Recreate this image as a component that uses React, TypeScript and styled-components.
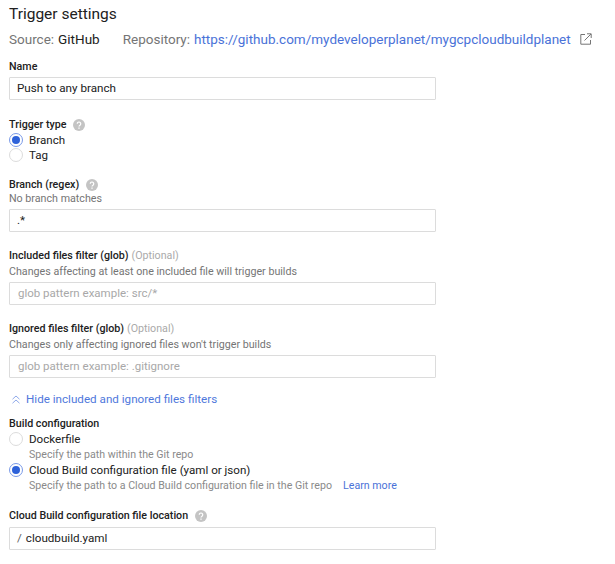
import styled, { createGlobalStyle } from "styled-components";

const GlobalStyle = createGlobalStyle`
  html, body {
    margin: 0;
    background: #fff;
    font-family: Roboto, "Liberation Sans", sans-serif;
  }
`;

const Page = styled.div`
  width: 615px;
  height: 564px;
  padding: 4px 0 0 9px;
  box-sizing: border-box;
  overflow: hidden;
`;

const Title = styled.h2`
  margin: 0;
  height: 20px;
  font-size: 15.5px;
  line-height: 20px;
  font-weight: 400;
  color: #212121;
`;

const SourceRow = styled.div`
  display: flex;
  align-items: center;
  height: 20px;
  margin-top: 5px;
  font-size: 13.5px;
  color: #757575;
  white-space: nowrap;
`;

const SourceValue = styled.span`
  color: #212121;
  margin-left: 4px;
  margin-right: 23px;
`;

const RepoLink = styled.a`
  color: #4a72d8;
  margin-left: 4px;
  margin-right: 9px;
`;

const Label = styled.div<{ $top: number }>`
  display: flex;
  align-items: center;
  gap: 7px;
  height: 14px;
  margin-top: ${(p) => p.$top}px;
  font-size: 10.7px;
  line-height: 14px;
  font-weight: 500;
  color: #212121;
`;

const Optional = styled.span`
  font-weight: 400;
  color: #aaa;
  margin-left: -4px;
`;

const Hint = styled.div<{ $top: number }>`
  height: 15px;
  margin-top: ${(p) => p.$top}px;
  font-size: 10.7px;
  line-height: 15px;
  color: #757575;
`;

const Field = styled.div<{ $top: number }>`
  display: flex;
  align-items: center;
  box-sizing: border-box;
  width: 427px;
  height: 23px;
  margin-top: ${(p) => p.$top}px;
  padding: 0 7px 2px;
  border: 1px solid #dcdcdc;
  border-radius: 1px;
  font-size: 11.65px;
  color: #212121;
`;

const Placeholder = styled.span`
  color: #a8a8a8;
  font-size: 11.5px;
  padding-left: 1px;
`;

const RadioRow = styled.div`
  display: flex;
  align-items: center;
  gap: 6px;
  height: 15.5px;
  font-size: 11.6px;
  color: #212121;
`;

const RadioCircle = styled.span<{ $on?: boolean }>`
  display: flex;
  align-items: center;
  justify-content: center;
  box-sizing: border-box;
  width: 14px;
  height: 14px;
  border-radius: 50%;
  border: 1px solid ${(p) => (p.$on ? "#7a9ae8" : "#dcdcdc")};
  &::after {
    content: "";
    display: ${(p) => (p.$on ? "block" : "none")};
    width: 8px;
    height: 8px;
    border-radius: 50%;
    background: #2e62d9;
  }
`;

const RadioHint = styled.div`
  display: flex;
  height: 15.5px;
  padding-left: 20px;
  font-size: 10.63px;
  line-height: 15.5px;
  color: #8a8a8a;
`;

const LearnMore = styled.a`
  color: #4a72d8;
  margin-left: 11px;
`;

const ToggleLink = styled.div`
  display: flex;
  align-items: center;
  gap: 6px;
  height: 16px;
  margin-top: 13px;
  margin-left: 3px;
  font-size: 11.65px;
  color: #4f78dc;
`;

const PathSlash = styled.span`
  color: #616161;
  margin-right: 4px;
`;

function HelpIcon() {
  return (
    <svg width="12" height="12" viewBox="0 0 24 24">
      <circle cx="12" cy="12" r="12" fill="#c4c4c4" />
      <path
        d="M8.5 9.5a3.5 3.5 0 1 1 5.5 2.9c-1.2.8-2 1.4-2 2.8"
        fill="none"
        stroke="#fff"
        strokeWidth="2.4"
      />
      <rect x="10.7" y="17" width="2.6" height="2.6" fill="#fff" />
    </svg>
  );
}

function ExternalIcon() {
  return (
    <svg width="12" height="12" viewBox="0 0 12 12" fill="none" stroke="#757575" strokeWidth="1">
      <path d="M5 1.5H.8v9.7h9.7V7" />
      <path d="M4.5 7.5 11 1M7 .8h4.2V5" />
    </svg>
  );
}

function ChevronsUpIcon() {
  return (
    <svg width="8" height="9" viewBox="0 0 8 9" fill="none" stroke="#8fa9ea" strokeWidth="1">
      <path d="M.5 4.2 4 1l3.5 3.2M.5 8.2 4 5l3.5 3.2" />
    </svg>
  );
}

export default function App() {
  return (
    <Page>
      <GlobalStyle />
      <Title>Trigger settings</Title>
      <SourceRow>
        Source:<SourceValue>GitHub</SourceValue>
        Repository:
        <RepoLink>https://github.com/mydeveloperplanet/mygcpcloudbuildplanet</RepoLink>
        <ExternalIcon />
      </SourceRow>

      <Label $top={11}>Name</Label>
      <Field $top={3}>Push to any branch</Field>

      <Label $top={18}>
        Trigger type <HelpIcon />
      </Label>
      <RadioRow>
        <RadioCircle $on />
        Branch
      </RadioRow>
      <RadioRow>
        <RadioCircle />
        Tag
      </RadioRow>

      <Label $top={15}>
        Branch (regex) <HelpIcon />
      </Label>
      <Hint $top={-1}>No branch matches</Hint>
      <Field $top={3}>.*</Field>

      <Label $top={17}>
        Included files filter (glob) <Optional>(Optional)</Optional>
      </Label>
      <Hint $top={1}>Changes affecting at least one included file will trigger builds</Hint>
      <Field $top={3}>
        <Placeholder>glob pattern example: src/*</Placeholder>
      </Field>

      <Label $top={17}>
        Ignored files filter (glob) <Optional>(Optional)</Optional>
      </Label>
      <Hint $top={1}>Changes only affecting ignored files won't trigger builds</Hint>
      <Field $top={3}>
        <Placeholder>glob pattern example: .gitignore</Placeholder>
      </Field>

      <ToggleLink>
        <ChevronsUpIcon />
        Hide included and ignored files filters
      </ToggleLink>

      <Label $top={10}>Build configuration</Label>
      <RadioRow>
        <RadioCircle />
        Dockerfile
      </RadioRow>
      <RadioHint>Specify the path within the Git repo</RadioHint>
      <RadioRow>
        <RadioCircle $on />
        Cloud Build configuration file (yaml or json)
      </RadioRow>
      <RadioHint>
        Specify the path to a Cloud Build configuration file in the Git repo
        <LearnMore>Learn more</LearnMore>
      </RadioHint>

      <Label $top={16}>
        Cloud Build configuration file location <HelpIcon />
      </Label>
      <Field $top={4}>
        <PathSlash>/</PathSlash>cloudbuild.yaml
      </Field>
    </Page>
  );
}
